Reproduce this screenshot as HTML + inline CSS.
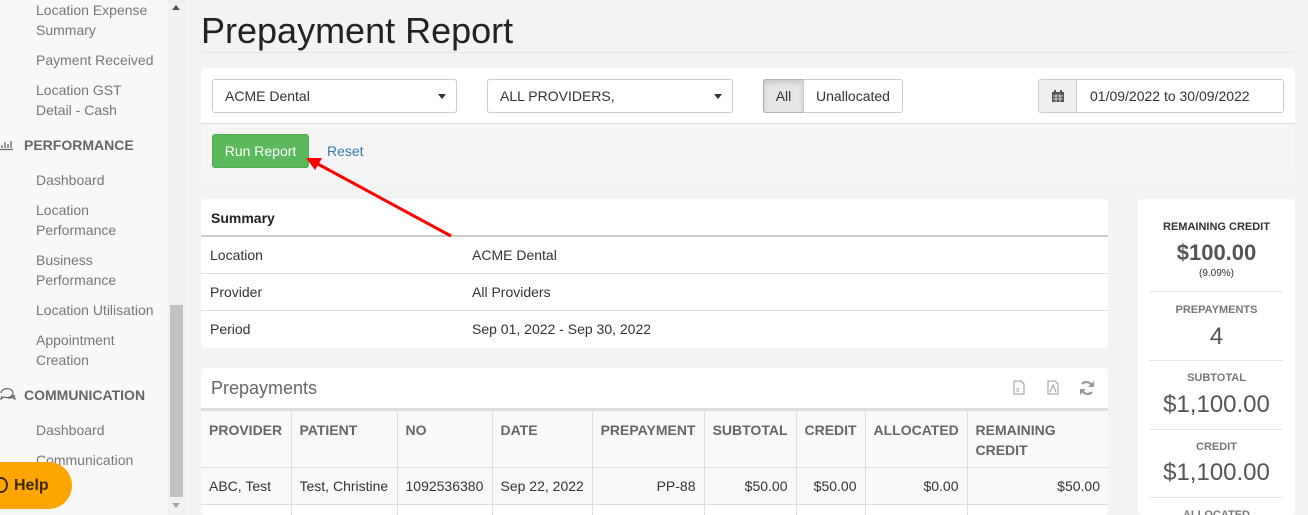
<!DOCTYPE html>
<html><head><meta charset="utf-8"><style>
*{box-sizing:border-box;margin:0;padding:0}
html,body{width:1308px;height:515px;overflow:hidden}
body{background:#f3f3f3;font-family:"Liberation Sans",Arial,sans-serif;font-size:14px;color:#333;position:relative}
.a{position:absolute}
.side{left:0;top:0;width:185px;height:515px;background:#f8f8f8;border-right:1px solid #e3e3e3}
.si{position:absolute;left:36px;color:#777;font-size:14px;line-height:20px}
.sh{position:absolute;left:24px;color:#666;font-weight:bold;font-size:14px}
.sel{background:#fff;border:1px solid #ccc;border-radius:3px;height:34px;line-height:32px;padding-left:12px;color:#333}
.caret{position:absolute;right:10px;top:14px;border-left:4px solid transparent;border-right:4px solid transparent;border-top:5px solid #333}
.panel{background:#fff;border-radius:4px}
td{border:1px solid #ddd;white-space:nowrap;overflow:hidden}
.st{font-size:11px;color:#777;font-weight:bold;text-align:center;width:100%}
.sv{font-size:24px;color:#555;text-align:center;width:100%}
.hr{left:11px;width:134px;height:1px;background:#e5e5e5}
</style></head><body>
<div class="a side">
<div class="si" style="top:0">Location Expense<br>Summary</div>
<div class="si" style="top:50px">Payment Received</div>
<div class="si" style="top:80px">Location GST<br>Detail - Cash</div>
<svg class="a" style="left:0;top:139px" width="14" height="12"><path d="M0 10.5H13M2 9V6M5 9V3M8 9V5M11 9V2" stroke="#666" stroke-width="1.3" fill="none"/></svg>
<div class="sh" style="top:137px">PERFORMANCE</div>
<div class="si" style="top:170px">Dashboard</div>
<div class="si" style="top:200px">Location<br>Performance</div>
<div class="si" style="top:250px">Business<br>Performance</div>
<div class="si" style="top:300px">Location Utilisation</div>
<div class="si" style="top:330px">Appointment<br>Creation</div>
<svg class="a" style="left:0;top:387px" width="16" height="14"><path d="M1 6a6 4.5 0 1 1 3 4l-3 2 1-3M8 11a5 3.5 0 0 0 6-3M14 8l1 4-3-1.5" stroke="#666" stroke-width="1.2" fill="none"/></svg>
<div class="sh" style="top:387px">COMMUNICATION</div>
<div class="si" style="top:420px">Dashboard</div>
<div class="si" style="top:450px">Communication<br>Logs</div>
<div class="a" style="left:168px;top:0;width:17px;height:515px;background:#f1f1f1"></div>
<div class="a" style="left:170px;top:305px;width:13px;height:192px;background:#c1c1c1"></div>
<div class="a" style="left:172px;top:5px;border-left:4px solid transparent;border-right:4px solid transparent;border-bottom:5px solid #505050"></div>
<div class="a" style="left:172px;top:503px;border-left:4px solid transparent;border-right:4px solid transparent;border-top:5px solid #a3a3a3"></div>
</div>
<div class="a" style="left:-14px;top:462px;width:86px;height:47px;background:#ffa500;border-radius:0 24px 24px 0;color:#3d2a00;font-weight:bold;font-size:16px;line-height:47px;padding-left:28px">Help</div>
<div class="a" style="left:-6px;top:477px;width:14px;height:16px;border:2.5px solid #3d2a00;border-radius:50%"></div>

<div class="a" style="left:201px;top:10px;font-size:36px;color:#222">Prepayment Report</div>
<div class="a" style="left:201px;top:52px;width:1093px;height:1px;background:#e5e5e5"></div>

<div class="a panel" style="left:201px;top:68px;width:1094px;height:111px;overflow:hidden">
<div class="a" style="left:0;top:55px;width:100%;height:56px;background:#f5f5f5;border-top:1px solid #ddd"></div>
<div class="a sel" style="left:11px;top:11px;width:245px">ACME Dental<span class="caret"></span></div>
<div class="a sel" style="left:286px;top:11px;width:246px">ALL PROVIDERS,<span class="caret"></span></div>
<div class="a" style="left:562px;top:11px;width:41px;height:34px;background:#e6e6e6;border:1px solid #adadad;border-radius:3px 0 0 3px;text-align:center;line-height:32px;box-shadow:inset 0 3px 5px rgba(0,0,0,.12)">All</div>
<div class="a" style="left:602px;top:11px;width:100px;height:34px;background:#fff;border:1px solid #ccc;border-radius:0 3px 3px 0;text-align:center;line-height:32px">Unallocated</div>
<div class="a" style="left:837px;top:11px;width:39px;height:34px;background:#eee;border:1px solid #ccc;border-radius:3px 0 0 3px"></div>
<svg class="a" style="left:851px;top:22px" width="12" height="12"><rect x="0" y="2" width="12" height="10" fill="#555"/><rect x="2" y="0" width="2" height="3" fill="#555"/><rect x="8" y="0" width="2" height="3" fill="#555"/><path d="M1 6H11M1 9H11M4 4V12M8 4V12" stroke="#eee" stroke-width="0.8"/></svg>
<div class="a" style="left:875px;top:11px;width:208px;height:34px;background:#fff;border:1px solid #ccc;border-radius:0 3px 3px 0;line-height:32px;padding-left:13px">01/09/2022 to 30/09/2022</div>
<div class="a" style="left:11px;top:66px;width:97px;height:34px;background:#5cb85c;border:1px solid #4cae4c;border-radius:3px;color:#fff;text-align:center;line-height:32px">Run Report</div>
<div class="a" style="left:126px;top:75px;color:#337ab7">Reset</div>
</div>

<div class="a panel" style="left:201px;top:199px;width:907px;height:149px;overflow:hidden">
<div class="a" style="left:10px;top:11px;font-weight:bold;color:#222">Summary</div>
<div class="a" style="left:0;top:36px;width:100%;height:2px;background:#ccc"></div>
<div class="a" style="left:9px;top:48px">Location</div><div class="a" style="left:271px;top:48px">ACME Dental</div>
<div class="a" style="left:0;top:74px;width:100%;height:1px;background:#ddd"></div>
<div class="a" style="left:9px;top:85px">Provider</div><div class="a" style="left:271px;top:85px">All Providers</div>
<div class="a" style="left:0;top:111px;width:100%;height:1px;background:#ddd"></div>
<div class="a" style="left:9px;top:122px">Period</div><div class="a" style="left:271px;top:122px">Sep 01, 2022 - Sep 30, 2022</div>
</div>

<div class="a panel" style="left:201px;top:368px;width:907px;height:147px;overflow:hidden">
<div class="a" style="left:10px;top:10px;font-size:18px;color:#666">Prepayments</div>
<svg class="a" style="left:812px;top:12px" width="12" height="15"><path d="M1 1H8L11 4V14H1Z" stroke="#999" fill="none"/><text x="3" y="12" font-size="7" fill="#999" font-family="Liberation Sans">x</text></svg>
<svg class="a" style="left:846px;top:12px" width="12" height="15"><path d="M1 1H8L11 4V14H1Z" stroke="#999" fill="none"/><path d="M3 12L6 5L9 12" stroke="#999" fill="none"/></svg>
<svg class="a" style="left:878px;top:12px" width="16" height="16"><path d="M13 6A6 6 0 0 0 3 4M3 10A6 6 0 0 0 13 12" stroke="#999" stroke-width="2.2" fill="none"/><path d="M15 1V7H9Z M1 15V9H7Z" fill="#999"/></svg>
<table class="a" style="left:0;top:40px;width:907px;border-collapse:collapse;table-layout:fixed;background:#f9f9f9;border-top:3px solid #ddd">
<colgroup><col style="width:90px"><col style="width:106px"><col style="width:95px"><col style="width:100px"><col style="width:112px"><col style="width:92px"><col style="width:69px"><col style="width:102px"><col style="width:141px"></colgroup>
<tr style="height:58px;color:#666;font-weight:bold;font-size:14px;vertical-align:top;line-height:20px">
<td style="padding:9px 8px 0;border-left:0">PROVIDER</td><td style="padding:9px 8px 0">PATIENT</td><td style="padding:9px 8px 0">NO</td><td style="padding:9px 8px 0">DATE</td><td style="padding:9px 8px 0;text-align:right">PREPAYMENT</td><td style="padding:9px 8px 0;text-align:right">SUBTOTAL</td><td style="padding:9px 8px 0">CREDIT</td><td style="padding:9px 8px 0">ALLOCATED</td><td style="padding:9px 8px 0;white-space:normal;border-right:0">REMAINING<br>CREDIT</td></tr>
<tr style="height:37px;text-align:right"><td style="text-align:left;padding:0 8px;border-left:0">ABC, Test</td><td style="text-align:left;padding:0 8px">Test, Christine</td><td style="text-align:left;padding:0 8px">1092536380</td><td style="text-align:left;padding:0 8px">Sep 22, 2022</td><td style="padding:0 8px">PP-88</td><td style="padding:0 8px">$50.00</td><td style="padding:0 8px">$50.00</td><td style="padding:0 8px">$0.00</td><td style="padding:0 8px;border-right:0">$50.00</td></tr>
<tr style="height:20px;background:#fff"><td style="border-left:0"></td><td></td><td></td><td></td><td></td><td></td><td></td><td></td><td style="border-right:0"></td></tr>
</table>
</div>

<div class="a panel" style="left:1138px;top:199px;width:157px;height:316px;overflow:hidden">
<div class="a st" style="top:22px;color:#333;font-size:11px">REMAINING CREDIT</div>
<div class="a" style="top:41px;width:100%;text-align:center;font-size:22px;font-weight:bold;color:#555">$100.00</div>
<div class="a" style="top:69px;width:100%;text-align:center;font-size:10px;color:#333">(9.09%)</div>
<div class="a hr" style="top:92px"></div>
<div class="a st" style="top:105px">PREPAYMENTS</div>
<div class="a sv" style="top:124px">4</div>
<div class="a hr" style="top:161px"></div>
<div class="a st" style="top:173px">SUBTOTAL</div>
<div class="a sv" style="top:192px">$1,100.00</div>
<div class="a hr" style="top:230px"></div>
<div class="a st" style="top:242px">CREDIT</div>
<div class="a sv" style="top:260px">$1,100.00</div>
<div class="a hr" style="top:298px"></div>
<div class="a st" style="top:310px">ALLOCATED</div>
</div>

<svg class="a" style="left:0;top:0" width="1308" height="515"><line x1="451" y1="236" x2="316" y2="163" stroke="#f00" stroke-width="3"/><path d="M306 158L322 158L315 170Z" fill="#f00"/></svg>
</body></html>
